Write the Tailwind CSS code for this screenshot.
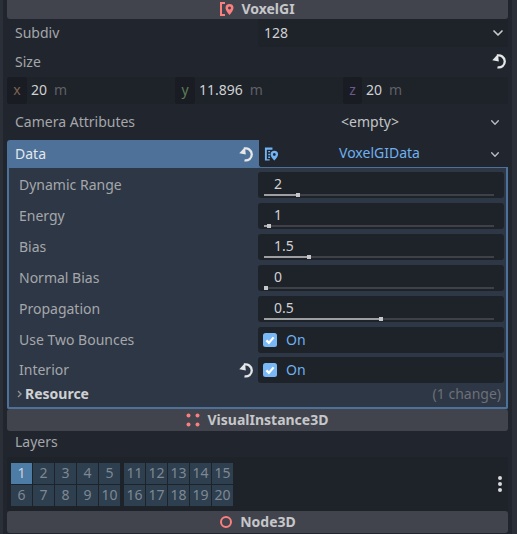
<!DOCTYPE html>
<html>
<head>
<meta charset="utf-8">
<script src="https://cdn.jsdelivr.net/npm/@tailwindcss/browser@4"></script>
</head>
<body class="m-0 w-[517px] h-[534px] overflow-hidden bg-[#2b2f38] font-['Noto_Sans',sans-serif] text-[14px] leading-[19px] text-[#a5a7ab]">
<svg width="0" height="0" class="absolute">
  <defs>
    <symbol id="reset" viewBox="0 0 16 16"><path d="M5 2.700 A6 6 0 1 1 5.500 14.300" fill="none" stroke="currentColor" stroke-width="2.300"/><path d="M0.300 7.200 L6 1 L6.800 8.400 Z" fill="currentColor"/></symbol>
    <symbol id="chev" viewBox="0 0 12 8"><path d="M2 2 L6 6 L10 2" fill="none" stroke="currentColor" stroke-width="1.700" stroke-linecap="round" stroke-linejoin="round"/></symbol>
    <symbol id="check" viewBox="0 0 14 14"><rect width="14" height="14" rx="2.500" fill="#7ab8f5"/><path d="M3.400 7.400 L5.900 9.900 L10.600 4.400" fill="none" stroke="#fff" stroke-width="2.200"/></symbol>
  </defs>
</svg>
<div class="ml-[3px] w-[509px] h-full pl-[4px] pr-[4px] bg-[#21262e]">
  <div class="flex items-center justify-center gap-[7px] h-[19px] pb-[2px] bg-[#41444c] rounded-b-[3px] font-bold text-[#c6c7ca]">
    <svg width="14" height="14" viewBox="0 0 14 14" class="text-[#fc7f7f]"><path d="M5 1 H1 V13 H5" fill="none" stroke="currentColor" stroke-width="2"/><path d="M9.500 2 a4 4 0 0 1 4 4 c0 2.500 -2.500 5 -4 7 c-1.500 -2 -4 -4.500 -4 -7 a4 4 0 0 1 4 -4 Z M9.500 4.500 a1.500 1.500 0 1 0 0.010 0 Z" fill="currentColor" fill-rule="evenodd"/></svg>
    <span>VoxelGI</span>
  </div>

  <div class="flex h-[28px]">
    <div class="w-[251px] pl-[8px] pb-[2px] flex items-center">Subdiv</div>
    <div class="flex-1 flex items-center justify-between bg-[#1e2229] rounded-[3px] pl-[6px] pr-[4px] pb-[2px] text-[#d0d1d3]">
      <span>128</span>
      <svg width="12" height="8" class="text-[#c8c9cb] mt-[1px]"><use href="#chev"/></svg>
    </div>
  </div>

  <div class="flex items-center justify-between h-[30px] pl-[8px] pr-0 pb-[2px]">
    <span>Size</span>
    <svg width="16" height="16" class="text-[#e6e7e8]"><use href="#reset"/></svg>
  </div>

  <div class="flex h-[27px] bg-[#1e2229] rounded-[3px]">
    <div class="w-[168px] flex items-center">
      <span class="w-[20px] h-full pb-[2px] flex items-center justify-center bg-[#191c22] rounded-[3px] text-[#7d6352]">x</span>
      <span class="ml-[4px] mb-[2px] text-[#d0d1d3]">20</span><span class="ml-[7px] mb-[2px] text-[#5e6165]">m</span>
    </div>
    <div class="w-[168px] flex items-center">
      <span class="w-[20px] h-full pb-[2px] flex items-center justify-center bg-[#191c22] rounded-[3px] text-[#5b7d56]">y</span>
      <span class="ml-[4px] mb-[2px] text-[#d0d1d3]">11.896</span><span class="ml-[7px] mb-[2px] text-[#5e6165]">m</span>
    </div>
    <div class="flex-1 flex items-center">
      <span class="w-[19px] h-full pb-[2px] flex items-center justify-center bg-[#191c22] rounded-[3px] text-[#6a5a8e]">z</span>
      <span class="ml-[4px] mb-[2px] text-[#d0d1d3]">20</span><span class="ml-[7px] mb-[2px] text-[#5e6165]">m</span>
    </div>
  </div>

  <div class="flex h-[36px]">
    <div class="w-[251px] pl-[8px] pb-[2px] flex items-center">Camera Attributes</div>
    <div class="flex-1 relative flex items-center justify-center pr-[26px] pb-[2px] text-[#c2c3c6]">&lt;empty&gt;
      <svg width="10" height="7" viewBox="0 0 12 8" class="absolute right-[8px] top-[15px] text-[#b8b9bc]"><use href="#chev"/></svg>
    </div>
  </div>

  <div class="flex h-[28px] bg-[#4d7198] rounded-t-[3px]">
    <div class="w-[251px] pl-[8px] pr-[3px] flex items-center justify-between text-[#e4e7eb]">
      <span class="mb-[2px]">Data</span>
      <svg width="16" height="16" class="text-[#e6e7e8]"><use href="#reset"/></svg>
    </div>
    <div class="flex-1 relative flex items-center bg-[#21262e] rounded-bl-[3px] border-l border-b border-[#4d7198] pl-[5px] text-[#6fb0ee]">
      <svg width="15" height="15" viewBox="0 0 16 16" class="text-[#70b4f5]"><path d="M1 1.500 H9 V4 H3 V14 H6 V15.500 H1 Z" fill="currentColor"/><path d="M4.500 6 H6.500 M4.500 9 H6.500 M4.500 12 H6.500" stroke="currentColor" stroke-width="1.500"/><path d="M11 5 a4 4 0 0 1 4 4 c0 2.300 -2.500 4.500 -4 6.500 c-1.500 -2 -4 -4.200 -4 -6.500 a4 4 0 0 1 4 -4 Z M11 7.500 a1.500 1.500 0 1 0 0.010 0 Z" fill="currentColor" fill-rule="evenodd"/></svg>
      <span class="flex-1 text-center pr-[28px] mb-[2px]">VoxelGIData</span>
      <svg width="10" height="7" viewBox="0 0 12 8" class="absolute right-[8px] top-[11px] text-[#b8b9bc]"><use href="#chev"/></svg>
    </div>
  </div>

  <div class="h-[241px] border-x-[2px] border-b-[2px] border-t-[0px] border-[#4d7198] bg-[#2e3745] rounded-b-[2px] pt-[4px] pr-[2px]">
    <div class="flex flex-col gap-[5px]">
      <div class="flex h-[26px]">
        <div class="w-[249px] pl-[10px] pb-[2px] flex items-center">Dynamic Range</div>
        <div class="flex-1 relative bg-[#1e2229] rounded-[3px] text-[#d0d1d3]"><span class="absolute left-[16px] top-[2px]">2</span>
          <div class="absolute left-[6px] w-[230px] top-[22px] h-[2px] bg-[#3e4147]"><div class="h-full w-[34px] bg-[#9d9fa2]"></div><div class="absolute left-[32px] top-[-1px] w-[4px] h-[4px] bg-[#c6c7c9]"></div></div>
        </div>
      </div>
      <div class="flex h-[26px]">
        <div class="w-[249px] pl-[10px] pb-[2px] flex items-center">Energy</div>
        <div class="flex-1 relative bg-[#1e2229] rounded-[3px] text-[#d0d1d3]"><span class="absolute left-[16px] top-[2px]">1</span>
          <div class="absolute left-[6px] w-[230px] top-[22px] h-[2px] bg-[#3e4147]"><div class="h-full w-[5px] bg-[#9d9fa2]"></div><div class="absolute left-[3px] top-[-1px] w-[4px] h-[4px] bg-[#c6c7c9]"></div></div>
        </div>
      </div>
      <div class="flex h-[26px]">
        <div class="w-[249px] pl-[10px] pb-[2px] flex items-center">Bias</div>
        <div class="flex-1 relative bg-[#1e2229] rounded-[3px] text-[#d0d1d3]"><span class="absolute left-[16px] top-[2px]">1.5</span>
          <div class="absolute left-[6px] w-[230px] top-[22px] h-[2px] bg-[#3e4147]"><div class="h-full w-[45px] bg-[#9d9fa2]"></div><div class="absolute left-[43px] top-[-1px] w-[4px] h-[4px] bg-[#c6c7c9]"></div></div>
        </div>
      </div>
      <div class="flex h-[26px]">
        <div class="w-[249px] pl-[10px] pb-[2px] flex items-center">Normal Bias</div>
        <div class="flex-1 relative bg-[#1e2229] rounded-[3px] text-[#d0d1d3]"><span class="absolute left-[16px] top-[2px]">0</span>
          <div class="absolute left-[6px] w-[230px] top-[22px] h-[2px] bg-[#3e4147]"><div class="absolute left-[0px] top-[-1px] w-[4px] h-[4px] bg-[#c6c7c9]"></div></div>
        </div>
      </div>
      <div class="flex h-[26px]">
        <div class="w-[249px] pl-[10px] pb-[2px] flex items-center">Propagation</div>
        <div class="flex-1 relative bg-[#1e2229] rounded-[3px] text-[#d0d1d3]"><span class="absolute left-[16px] top-[2px]">0.5</span>
          <div class="absolute left-[6px] w-[230px] top-[22px] h-[2px] bg-[#3e4147]"><div class="h-full w-[117px] bg-[#9d9fa2]"></div><div class="absolute left-[115px] top-[-1px] w-[4px] h-[4px] bg-[#c6c7c9]"></div></div>
        </div>
      </div>
      <div class="flex h-[26px]">
        <div class="w-[249px] pl-[10px] pb-[2px] flex items-center">Use Two Bounces</div>
        <div class="flex-1 flex items-center bg-[#1e2229] rounded-[3px] pl-[5px] text-[#6fb0ee]"><svg width="14" height="14"><use href="#check"/></svg><span class="ml-[9px] mb-[2px]">On</span></div>
      </div>
    </div>
    <div class="flex h-[26px] mt-[4px]">
      <div class="w-[249px] pl-[10px] pr-[3px] flex items-center justify-between"><span class="mb-[2px]">Interior</span><svg width="16" height="16" class="text-[#e6e7e8]"><use href="#reset"/></svg></div>
      <div class="flex-1 flex items-center bg-[#1e2229] rounded-[3px] pl-[5px] text-[#6fb0ee]"><svg width="14" height="14"><use href="#check"/></svg><span class="ml-[9px] mb-[2px]">On</span></div>
    </div>
    <div class="flex items-center justify-between h-[23px] pl-[8px] pr-[3px] pb-[2px]">
      <div class="flex items-center gap-[3px] font-bold text-[#d0d1d3]"><svg width="5" height="8" viewBox="0 0 5 8" class="text-[#8f9296]"><path d="M1 1 L4 4 L1 7" fill="none" stroke="currentColor" stroke-width="1.400"/></svg><span>Resource</span></div>
      <span class="text-[#6c7077]">(1 change)</span>
    </div>
  </div>

  <div class="flex items-center justify-center gap-[7px] h-[22px] pb-[2px] bg-[#41444c] rounded-[3px] font-bold text-[#c6c7ca]">
    <svg width="14" height="14" viewBox="0 0 14 14" class="text-[#fc7f7f] mt-[2px] -translate-x-px"><circle cx="2.500" cy="2.500" r="2" fill="currentColor"/><circle cx="11.500" cy="2.500" r="2" fill="currentColor"/><circle cx="2.500" cy="11.500" r="2" fill="currentColor"/><circle cx="11.500" cy="11.500" r="2" fill="currentColor"/></svg>
    <span>VisualInstance3D</span>
  </div>

  <div class="flex items-center h-[26px] pl-[8px] pb-[6px]">Layers</div>

  <div class="flex items-center h-[54px] bg-[#1e2229] rounded-[3px] pl-[4px] pr-[5px] text-[#7f8892]">
    <div class="grid grid-cols-[repeat(5,21px)] grid-rows-[21px_21px] gap-[1px] text-center leading-[19px]">
      <div class="bg-[#4d7ca6] text-[#c9d2dc]">1</div><div class="bg-[#2e3f50]">2</div><div class="bg-[#2e3f50]">3</div><div class="bg-[#2e3f50]">4</div><div class="bg-[#2e3f50]">5</div>
      <div class="bg-[#2e3f50]">6</div><div class="bg-[#2e3f50]">7</div><div class="bg-[#2e3f50]">8</div><div class="bg-[#2e3f50]">9</div><div class="bg-[#2e3f50]">10</div>
    </div>
    <div class="ml-[4px] grid grid-cols-[repeat(5,21px)] grid-rows-[21px_21px] gap-[1px] text-center leading-[19px]">
      <div class="bg-[#2e3f50]">11</div><div class="bg-[#2e3f50]">12</div><div class="bg-[#2e3f50]">13</div><div class="bg-[#2e3f50]">14</div><div class="bg-[#2e3f50]">15</div>
      <div class="bg-[#2e3f50]">16</div><div class="bg-[#2e3f50]">17</div><div class="bg-[#2e3f50]">18</div><div class="bg-[#2e3f50]">19</div><div class="bg-[#2e3f50]">20</div>
    </div>
    <svg width="4" height="16" viewBox="0 0 4 16" class="ml-auto mr-[1px] text-[#d8d9db]"><circle cx="2" cy="2" r="2" fill="currentColor"/><circle cx="2" cy="8" r="2" fill="currentColor"/><circle cx="2" cy="14" r="2" fill="currentColor"/></svg>
  </div>

  <div class="flex items-center justify-center gap-[7px] h-[22px] pb-[2px] bg-[#41444c] rounded-[3px] font-bold text-[#c6c7ca]">
    <svg width="14" height="14" viewBox="0 0 14 14" class="text-[#fc7f7f] mt-[2px]"><circle cx="7" cy="7" r="5" fill="none" stroke="currentColor" stroke-width="2"/></svg>
    <span>Node3D</span>
  </div>
</div>
</body>
</html>
